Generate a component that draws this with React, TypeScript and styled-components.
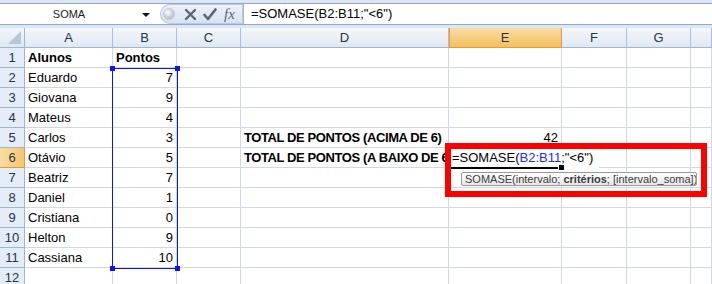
import styled, { createGlobalStyle } from "styled-components";

const GlobalStyle = createGlobalStyle`
  html, body { margin: 0; padding: 0; background: #ffffff; }
  body {
    width: 712px;
    height: 284px;
    overflow: hidden;
    font-family: "Liberation Sans", Arial, sans-serif;
    color: #000;
  }
`;

const COLS = ["A", "B", "C", "D", "E", "F", "G", ""];
const COL_WIDTHS = "25px 88px 64px 64px 208px 113px 65px 64px 21px";

const alunos: [string, number][] = [
  ["Eduardo", 7],
  ["Giovana", 9],
  ["Mateus", 4],
  ["Carlos", 3],
  ["Otávio", 5],
  ["Beatriz", 7],
  ["Daniel", 1],
  ["Cristiana", 0],
  ["Helton", 9],
  ["Cassiana", 10],
];

const Window = styled.div`
  width: 712px;
  height: 284px;
  display: flex;
  flex-direction: column;
  overflow: hidden;
`;

const TopArea = styled.div`
  background: #dde7f4;
  padding: 3px 0 3px 0;
`;

const FormulaBar = styled.div`
  display: flex;
  height: 20px;
  border-top: 1px solid #8fa9c9;
  border-bottom: 1px solid #8fa9c9;
  background: #fff;
`;

const NameBox = styled.div`
  width: 160px;
  display: flex;
  align-items: center;
  font-size: 11px;
  color: #1b1b1b;
`;

const NameText = styled.span`
  flex: 1;
  text-align: center;
  padding-left: 2px;
`;

const DropArrow = styled.span`
  width: 0;
  height: 0;
  margin: 1px 10px 0 6px;
  border-left: 4px solid transparent;
  border-right: 4px solid transparent;
  border-top: 4px solid #111;
`;

const Pill = styled.div`
  width: 83px;
  display: flex;
  align-items: center;
  border-radius: 10px 0 0 10px;
  border-right: 1px solid #a4b8d1;
  background: linear-gradient(#eef3fa, #d6e1ef);
  box-shadow: inset 0 0 0 1px #b9cade;
`;

const Knob = styled.span`
  width: 10px;
  height: 10px;
  margin: 0 6px 0 3px;
  border-radius: 50%;
  background: radial-gradient(circle at 40% 35%, #ffffff, #b7c1cd 70%);
  border: 1px solid #c3ccd8;
`;

const IconSlot = styled.span`
  width: 19px;
  display: flex;
  justify-content: center;
  align-items: center;
`;

const Fx = styled.span`
  font-family: "Liberation Serif", "Times New Roman", serif;
  font-style: italic;
  font-size: 15px;
  color: #5c6673;
  margin-left: 2px;
`;

const FormulaInput = styled.div`
  flex: 1;
  padding-left: 7px;
  font-size: 13px;
  line-height: 20px;
  white-space: nowrap;
`;

const Sheet = styled.div`
  position: relative;
  flex: 1;
  overflow: hidden;
`;

const Grid = styled.div`
  display: grid;
  grid-template-columns: ${COL_WIDTHS};
  grid-auto-rows: 20px;
`;

const Corner = styled.div`
  position: relative;
  background: linear-gradient(#f2f6fb, #dfe7f1);
  border-right: 1px solid #9eb6ce;
  border-bottom: 1px solid #9eb6ce;
  box-sizing: border-box;
  &::after {
    content: "";
    position: absolute;
    right: 3px;
    bottom: 3px;
    width: 0;
    height: 0;
    border-left: 13px solid transparent;
    border-bottom: 13px solid #b8c6d8;
  }
`;

const ColHead = styled.div<{ $active?: boolean }>`
  box-sizing: border-box;
  display: flex;
  align-items: center;
  justify-content: center;
  font-size: 13px;
  color: #26354a;
  background: ${(p) =>
    p.$active ? "linear-gradient(#f9dca4, #f1c15f)" : "linear-gradient(#f4f7fb, #e1e8f2)"};
  border-right: 1px solid ${(p) => (p.$active ? "#f29536" : "#abc0d8")};
  border-bottom: 1px solid ${(p) => (p.$active ? "#f29536" : "#9eb6ce")};
  ${(p) => (p.$active ? "box-shadow: inset 1px 0 0 #f29536;" : "")}
`;

const RowHead = styled.div<{ $active?: boolean }>`
  box-sizing: border-box;
  display: flex;
  align-items: center;
  justify-content: center;
  font-size: 13px;
  color: #26354a;
  background: ${(p) => (p.$active ? "linear-gradient(90deg, #f9dca4, #f3c872)" : "#e4ecf7")};
  border-right: 1px solid ${(p) => (p.$active ? "#f29536" : "#9eb6ce")};
  border-bottom: 1px solid ${(p) => (p.$active ? "#f29536" : "#9eb6ce")};
`;

const Cell = styled.div<{ $align?: "left" | "right"; $bold?: boolean; $tight?: boolean }>`
  box-sizing: border-box;
  border-right: 1px solid #d0d7e5;
  border-bottom: 1px solid #d0d7e5;
  padding: 0 3px;
  font-size: 13px;
  line-height: 20px;
  white-space: nowrap;
  overflow: hidden;
  text-align: ${(p) => p.$align ?? "left"};
  font-weight: ${(p) => (p.$bold ? 700 : 400)};
  letter-spacing: ${(p) => (p.$tight ? "-0.4px" : "normal")};
`;

const Selection = styled.div`
  position: absolute;
  left: 112px;
  top: 40px;
  width: 66px;
  height: 201px;
  box-sizing: border-box;
  border: 1px solid #0a14ff;
  pointer-events: none;
`;

const Handle = styled.span<{ $x: "l" | "r"; $y: "t" | "b" }>`
  position: absolute;
  width: 5px;
  height: 5px;
  background: #0a14ff;
  ${(p) => (p.$x === "l" ? "left: -3px;" : "right: -3px;")}
  ${(p) => (p.$y === "t" ? "top: -3px;" : "bottom: -3px;")}
`;

const Editor = styled.div`
  position: absolute;
  left: 449px;
  top: 120px;
  width: 150px;
  height: 20px;
  background: #fff;
  padding-left: 3px;
  font-size: 13px;
  line-height: 20px;
  white-space: nowrap;
  box-sizing: border-box;
`;

const Ref = styled.span`
  color: #1a2cff;
`;

const ActiveEdge = styled.div`
  position: absolute;
  left: 449px;
  top: 139px;
  width: 112px;
  height: 2px;
  background: #000;
  &::after {
    content: "";
    position: absolute;
    right: -4px;
    top: -3px;
    width: 5px;
    height: 5px;
    background: #000;
    border: 1px solid #fff;
  }
`;

const Tooltip = styled.div`
  position: absolute;
  left: 461px;
  top: 144px;
  width: 236px;
  height: 14px;
  box-sizing: border-box;
  border: 1px solid #9a9a9a;
  border-radius: 2px;
  background: linear-gradient(#ffffff, #e6e6e6);
  font-size: 11px;
  line-height: 12px;
  padding-left: 3px;
  color: #3c3c3c;
  white-space: nowrap;
  overflow: hidden;
`;

const Highlight = styled.div`
  position: absolute;
  left: 445px;
  top: 115px;
  width: 262px;
  height: 54px;
  box-sizing: border-box;
  border: 6px solid #ff0000;
  pointer-events: none;
`;

function CrossIcon() {
  return (
    <svg width="13" height="13" viewBox="0 0 13 13">
      <path d="M2 2 L11 11 M11 2 L2 11" stroke="#5c6673" strokeWidth="2.4" strokeLinecap="round" />
    </svg>
  );
}

function CheckIcon() {
  return (
    <svg width="14" height="13" viewBox="0 0 14 13">
      <path d="M1.5 7 L5 11 L12.5 1.5" stroke="#5c6673" strokeWidth="2.6" fill="none" strokeLinecap="round" strokeLinejoin="round" />
    </svg>
  );
}

function cellsFor(row: number) {
  const out: JSX.Element[] = [];
  const active = row === 6;
  out.push(
    <RowHead key={`h${row}`} $active={active}>
      {row}
    </RowHead>
  );
  let a = "";
  let b = "";
  let bBold = false;
  if (row === 1) {
    a = "Alunos";
    b = "Pontos";
    bBold = true;
  } else if (row <= 11) {
    a = alunos[row - 2][0];
    b = String(alunos[row - 2][1]);
  }
  out.push(
    <Cell key={`a${row}`} $bold={row === 1}>
      {a}
    </Cell>
  );
  out.push(
    <Cell key={`b${row}`} $bold={bBold} $align={row === 1 ? "left" : "right"}>
      {b}
    </Cell>
  );
  out.push(<Cell key={`c${row}`} />);
  let d = "";
  if (row === 5) d = "TOTAL DE PONTOS (ACIMA DE 6)";
  if (row === 6) d = "TOTAL DE PONTOS (A BAIXO DE 6)";
  out.push(
    <Cell key={`d${row}`} $bold $tight>
      {d}
    </Cell>
  );
  out.push(
    <Cell key={`e${row}`} $align="right">
      {row === 5 ? "42" : ""}
    </Cell>
  );
  out.push(<Cell key={`f${row}`} />);
  out.push(<Cell key={`g${row}`} />);
  out.push(<Cell key={`x${row}`} />);
  return out;
}

export default function App() {
  const rows = Array.from({ length: 12 }, (_, i) => i + 1);
  return (
    <>
      <GlobalStyle />
      <Window>
        <TopArea>
          <FormulaBar>
            <NameBox>
              <NameText>SOMA</NameText>
              <DropArrow />
            </NameBox>
            <Pill>
              <Knob />
              <IconSlot>
                <CrossIcon />
              </IconSlot>
              <IconSlot>
                <CheckIcon />
              </IconSlot>
              <IconSlot>
                <Fx>fx</Fx>
              </IconSlot>
            </Pill>
            <FormulaInput>=SOMASE(B2:B11;"&lt;6")</FormulaInput>
          </FormulaBar>
        </TopArea>
        <Sheet>
          <Grid>
            <Corner />
            {COLS.map((c, i) => (
              <ColHead key={i} $active={c === "E"}>
                {c}
              </ColHead>
            ))}
            {rows.map((r) => cellsFor(r))}
          </Grid>
          <Selection>
            <Handle $x="l" $y="t" />
            <Handle $x="r" $y="t" />
            <Handle $x="l" $y="b" />
            <Handle $x="r" $y="b" />
          </Selection>
          <Editor>
            =SOMASE(<Ref>B2:B11</Ref>;"&lt;6")
          </Editor>
          <ActiveEdge />
          <Tooltip>
            SOMASE(intervalo; <b>critérios</b>; [intervalo_soma])
          </Tooltip>
          <Highlight />
        </Sheet>
      </Window>
    </>
  );
}
